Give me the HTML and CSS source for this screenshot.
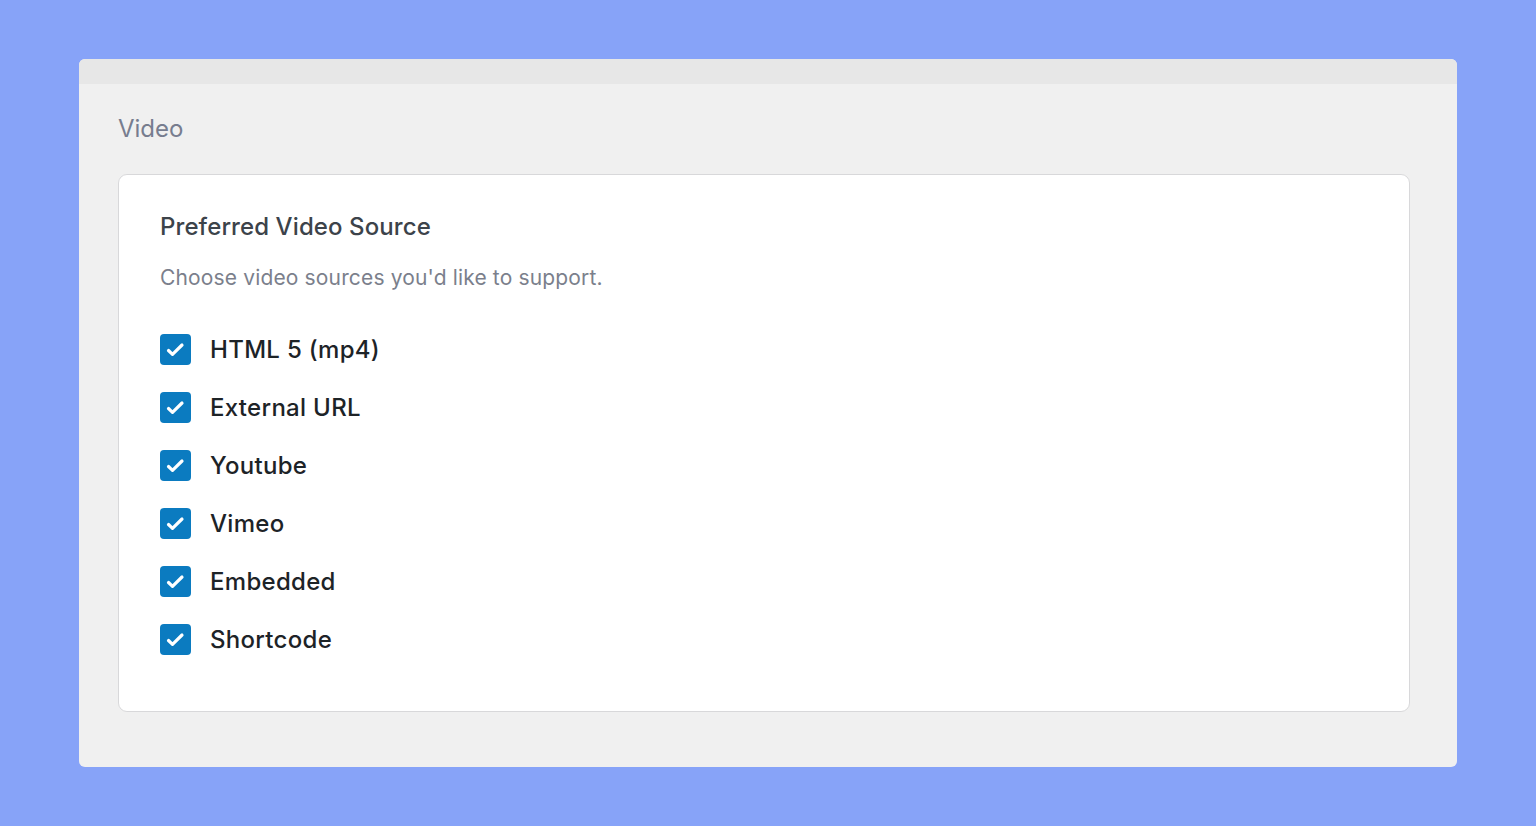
FILE: index.html
```html
<!DOCTYPE html>
<html>
<head>
<meta charset="utf-8">
<link rel="stylesheet" href="styles.css">
</head>
<body>
<div class="panel">
  <div class="panel-top"></div>
  <div class="panel-body">
    <h2 class="section-title">Video</h2>
    <div class="card">
      <h3 class="card-title">Preferred Video Source</h3>
      <p class="card-desc">Choose video sources you'd like to support.</p>
      <ul class="options">
        <li class="option"><span class="cb"><svg viewBox="0 0 31 31"><path d="M8.5 16.5l4 3.8 9.5-9.3" fill="none" stroke="#fff" stroke-width="3.2" stroke-linecap="round" stroke-linejoin="round"/></svg></span><span class="label">HTML 5 (mp4)</span></li>
        <li class="option"><span class="cb"><svg viewBox="0 0 31 31"><path d="M8.5 16.5l4 3.8 9.5-9.3" fill="none" stroke="#fff" stroke-width="3.2" stroke-linecap="round" stroke-linejoin="round"/></svg></span><span class="label">External URL</span></li>
        <li class="option"><span class="cb"><svg viewBox="0 0 31 31"><path d="M8.5 16.5l4 3.8 9.5-9.3" fill="none" stroke="#fff" stroke-width="3.2" stroke-linecap="round" stroke-linejoin="round"/></svg></span><span class="label">Youtube</span></li>
        <li class="option"><span class="cb"><svg viewBox="0 0 31 31"><path d="M8.5 16.5l4 3.8 9.5-9.3" fill="none" stroke="#fff" stroke-width="3.2" stroke-linecap="round" stroke-linejoin="round"/></svg></span><span class="label">Vimeo</span></li>
        <li class="option"><span class="cb"><svg viewBox="0 0 31 31"><path d="M8.5 16.5l4 3.8 9.5-9.3" fill="none" stroke="#fff" stroke-width="3.2" stroke-linecap="round" stroke-linejoin="round"/></svg></span><span class="label">Embedded</span></li>
        <li class="option"><span class="cb"><svg viewBox="0 0 31 31"><path d="M8.5 16.5l4 3.8 9.5-9.3" fill="none" stroke="#fff" stroke-width="3.2" stroke-linecap="round" stroke-linejoin="round"/></svg></span><span class="label">Shortcode</span></li>
      </ul>
    </div>
  </div>
</div>
</body>
</html>
```
FILE: styles.css
```css
html, body {
  margin: 0;
  padding: 0;
}
body {
  background: #87a3f8;
  font-family: Inter, "Noto Sans", sans-serif;
  padding: 59px 79px;
  height: 826px;
  box-sizing: border-box;
}
.panel {
  background: #f0f0f0;
  border-radius: 6px;
  overflow: hidden;
  height: 708px;
  display: flex;
  flex-direction: column;
}
.panel-top {
  height: 25px;
  background: #e7e7e7;
  flex: none;
}
.panel-body {
  padding: 30px 47px 0 39px;
}
.section-title {
  margin: 0;
  font-size: 24px;
  font-weight: 400;
  color: #777d8f;
  line-height: 30px;
}
.card {
  margin-top: 30px;
  background: #fff;
  border: 1px solid #d8d8da;
  border-radius: 9px;
  padding: 37px 41px 40px 41px;
  height: 538px;
  box-sizing: border-box;
}
.card-title {
  margin: 0;
  font-size: 24px;
  font-weight: 500;
  color: #3c434a;
  line-height: 30px;
  letter-spacing: 0.1px;
}
.card-desc {
  margin: 23px 0 0;
  font-size: 21px;
  color: #7b7f8c;
  line-height: 26px;
  letter-spacing: 0.15px;
}
.options {
  list-style: none;
  margin: 43px 0 0;
  padding: 0;
  display: flex;
  flex-direction: column;
  gap: 27px;
}
.option {
  display: flex;
  align-items: center;
  gap: 19px;
  height: 31px;
}
.cb {
  width: 31px;
  height: 31px;
  border-radius: 4px;
  background: #0b7bc0;
  display: flex;
  flex: none;
}
.cb svg {
  width: 31px;
  height: 31px;
}
.label {
  font-size: 24px;
  font-weight: 500;
  color: #1d2327;
  letter-spacing: 0.3px;
}
```
